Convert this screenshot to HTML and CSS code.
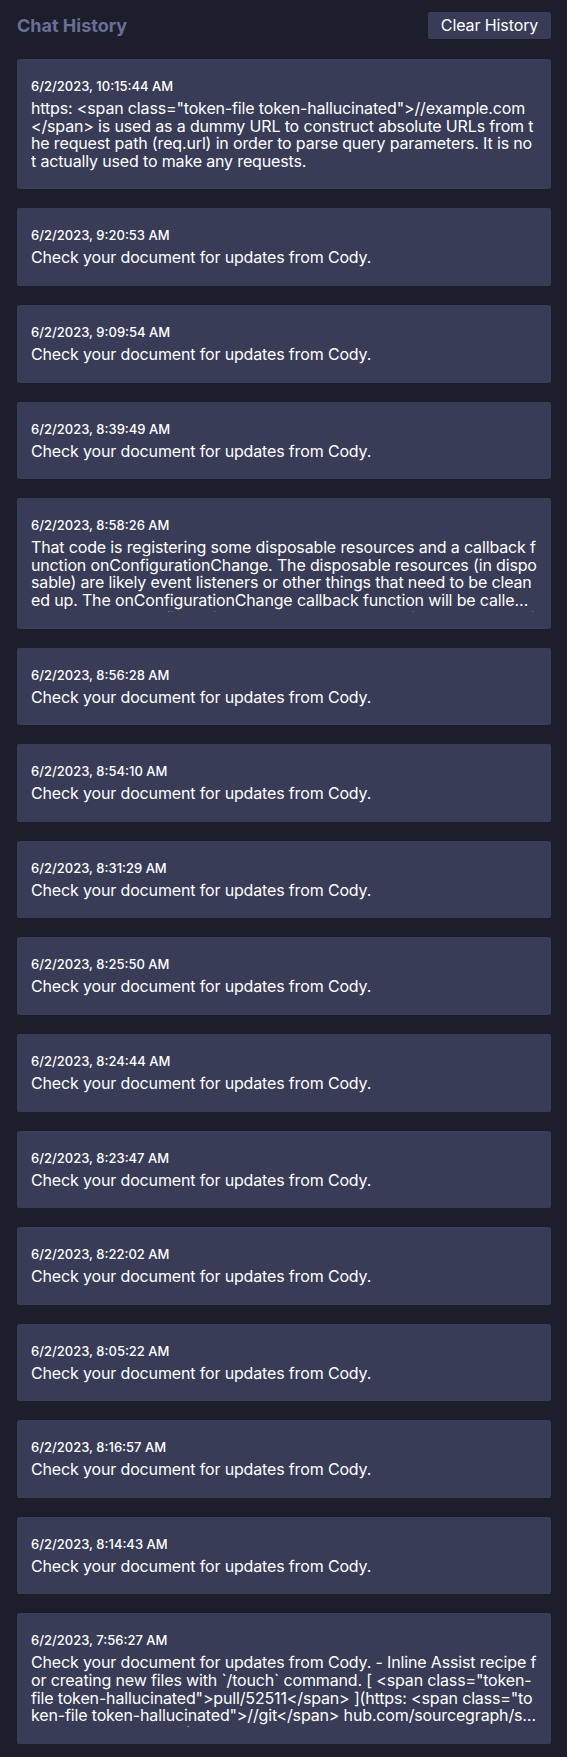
FILE: index.html
```html
<!DOCTYPE html>
<html lang="en">
<head>
<meta charset="utf-8">
<title>Chat History</title>
<link rel="stylesheet" href="styles.css">
</head>
<body>
<div class="page">
  <header class="header">
    <h1 class="title">Chat History</h1>
    <button class="clear-btn" type="button">Clear History</button>
  </header>
  <ul class="history">
    <li class="card">
      <div class="time">6/2/2023, 10:15:44 AM</div>
      <div class="text clamp">https: &lt;span class="token-file token-hallucinated"&gt;//example.com &lt;/span&gt; is used as a dummy URL to construct absolute URLs from the request path (req.url) in order to parse query parameters. It is not actually used to make any requests.</div>
    </li>
    <li class="card">
      <div class="time">6/2/2023, 9:20:53 AM</div>
      <div class="text">Check your document for updates from Cody.</div>
    </li>
    <li class="card">
      <div class="time">6/2/2023, 9:09:54 AM</div>
      <div class="text">Check your document for updates from Cody.</div>
    </li>
    <li class="card">
      <div class="time">6/2/2023, 8:39:49 AM</div>
      <div class="text">Check your document for updates from Cody.</div>
    </li>
    <li class="card">
      <div class="time">6/2/2023, 8:58:26 AM</div>
      <div class="text clamp">That code is registering some disposable resources and a callback function onConfigurationChange. The disposable resources (in disposable) are likely event listeners or other things that need to be cleaned up. The onConfigurationChange callback function will be called whenever the configuration changes, so the extension can react to it.</div>
    </li>
    <li class="card">
      <div class="time">6/2/2023, 8:56:28 AM</div>
      <div class="text">Check your document for updates from Cody.</div>
    </li>
    <li class="card">
      <div class="time">6/2/2023, 8:54:10 AM</div>
      <div class="text">Check your document for updates from Cody.</div>
    </li>
    <li class="card">
      <div class="time">6/2/2023, 8:31:29 AM</div>
      <div class="text">Check your document for updates from Cody.</div>
    </li>
    <li class="card">
      <div class="time">6/2/2023, 8:25:50 AM</div>
      <div class="text">Check your document for updates from Cody.</div>
    </li>
    <li class="card">
      <div class="time">6/2/2023, 8:24:44 AM</div>
      <div class="text">Check your document for updates from Cody.</div>
    </li>
    <li class="card">
      <div class="time">6/2/2023, 8:23:47 AM</div>
      <div class="text">Check your document for updates from Cody.</div>
    </li>
    <li class="card">
      <div class="time">6/2/2023, 8:22:02 AM</div>
      <div class="text">Check your document for updates from Cody.</div>
    </li>
    <li class="card">
      <div class="time">6/2/2023, 8:05:22 AM</div>
      <div class="text">Check your document for updates from Cody.</div>
    </li>
    <li class="card">
      <div class="time">6/2/2023, 8:16:57 AM</div>
      <div class="text">Check your document for updates from Cody.</div>
    </li>
    <li class="card">
      <div class="time">6/2/2023, 8:14:43 AM</div>
      <div class="text">Check your document for updates from Cody.</div>
    </li>
    <li class="card">
      <div class="time">6/2/2023, 7:56:27 AM</div>
      <div class="text clamp">Check your document for updates from Cody. - Inline Assist recipe for creating new files with `/touch` command. [ &lt;span class="token-file token-hallucinated"&gt;pull/52511&lt;/span&gt; ](https: &lt;span class="token-file token-hallucinated"&gt;//git&lt;/span&gt; hub.com/sourcegraph/sourcegraph/pull/52511)</div>
    </li>
  </ul>
</div>
</body>
</html>
```

FILE: styles.css
```css
html, body {
  margin: 0;
  padding: 0;
  background: #1c1e2b;
}

body {
  font-family: Inter, "Noto Sans", "Liberation Sans", sans-serif;
  color: #ffffff;
}

.page {
  padding: 12px 16px 14px 17px;
}

.header {
  display: flex;
  align-items: center;
  justify-content: space-between;
  height: 27px;
}

.title {
  margin: 0;
  font-size: 18px;
  font-weight: 700;
  color: #696f95;
  line-height: 22px;
}

.clear-btn {
  font-family: inherit;
  font-size: 16px;
  line-height: 19px;
  letter-spacing: -0.1px;
  color: #ffffff;
  background: #383c56;
  border: none;
  border-radius: 2px;
  height: 27px;
  width: 123px;
  padding: 0;
}

.history {
  list-style: none;
  margin: 20px 0 0;
  padding: 0;
  display: flex;
  flex-direction: column;
  gap: 19px;
}

.card {
  background: #383c56;
  border-radius: 2px;
  padding: 19px 14px 19px;
}

.time {
  font-size: 13px;
  line-height: 16px;
  font-weight: 500;
  margin-bottom: 6px;
}

.text {
  font-size: 16px;
  line-height: 17.6px;
  letter-spacing: -0.15px;
  word-break: break-all;
}

.clamp {
  display: -webkit-box;
  -webkit-box-orient: vertical;
  -webkit-line-clamp: 4;
  overflow: hidden;
  padding-bottom: 2px;
  margin-bottom: -2px;
}
```
